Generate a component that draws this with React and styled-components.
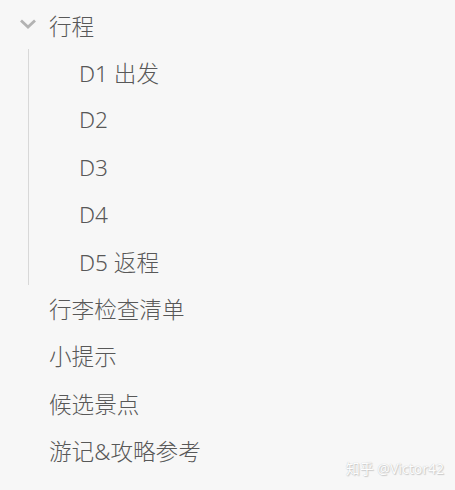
import React, { useState } from "react";
import styled, { createGlobalStyle } from "styled-components";

const GlobalStyle = createGlobalStyle`
  html, body {
    margin: 0;
    padding: 0;
    background: #f7f7f7;
  }
  body {
    font-family: "Noto Sans", "Noto Sans CJK SC", sans-serif;
    color: #585858;
  }
`;

const days = ["D1 出发", "D2", "D3", "D4", "D5 返程"];
const others = ["行李检查清单", "小提示", "候选景点", "游记&攻略参考"];

function App() {
  const [open, setOpen] = useState(true);

  return (
    <StPage>
      <GlobalStyle />
      <StTree>
        <StRow onClick={() => setOpen(!open)}>
          <StToggle>
            <svg width="18" height="12" viewBox="0 0 18 12">
              <path d="M2 2.5 L9 9 L16 2.5" fill="none" stroke="#b3b3b3" strokeWidth="2.8" />
            </svg>
          </StToggle>
          <StLabel>行程</StLabel>
        </StRow>
        {open && (
          <StChildren>
            {days.map((day) => (
              <StRow key={day}>
                <StLabel>{day}</StLabel>
              </StRow>
            ))}
          </StChildren>
        )}
        {others.map((item) => (
          <StRow key={item}>
            <StLabel $indent>{item}</StLabel>
          </StRow>
        ))}
      </StTree>
      <StMark>知乎 @Victor42</StMark>
    </StPage>
  );
}

const StPage = styled.div`
  position: relative;
  width: 455px;
  height: 490px;
  overflow: hidden;
`;
const StTree = styled.div`
  padding-top: 2px;
`;
const StRow = styled.div`
  display: flex;
  align-items: center;
  height: 47.2px;
  cursor: default;
`;
const StToggle = styled.div`
  width: 18px;
  margin-left: 19px;
  margin-right: 12px;
  display: flex;
  align-items: center;
  padding-bottom: 4px;
`;
const StLabel = styled.span`
  font-size: 22.6px;
  font-weight: 300;
  margin-left: ${(props) => (props.$indent ? "49px" : "0")};
  white-space: nowrap;
`;
const StChildren = styled.div`
  margin-left: 28px;
  border-left: 1px solid #d8d8d8;
  padding-left: 50px;
`;
const StMark = styled.div`
  position: absolute;
  right: 11px;
  bottom: 12px;
  font-size: 14px;
  color: #fdfdfd;
  text-shadow: 0 0 1px #bbb, 1px 1px 1px #ccc;
`;

export default App;
